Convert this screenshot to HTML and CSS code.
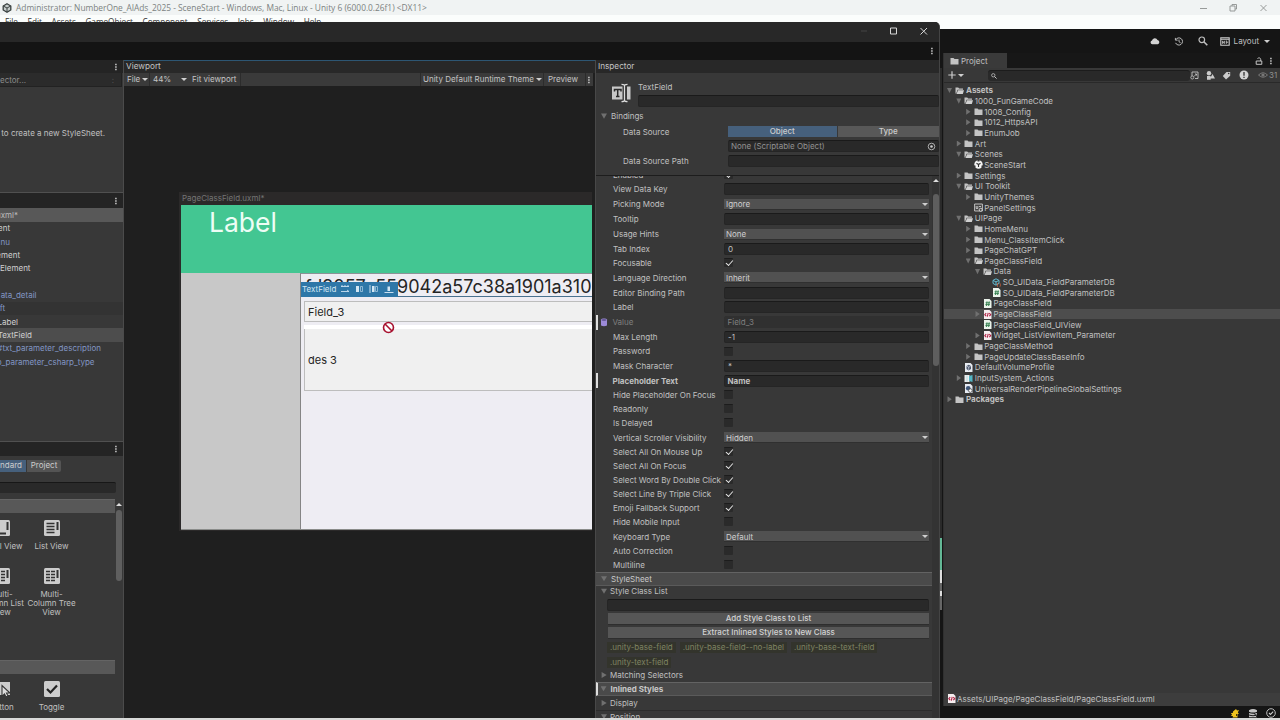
FILE: index.html
```html
<!DOCTYPE html>
<html lang="en">
<head>
    <meta charset="UTF-8">
    <title>Unity 6 - UI Builder</title>
    <link rel="stylesheet" href="styles.css">
</head>
<body>
    <!-- Shared icons -->
    <svg class="defs">
        <symbol id="folder" viewBox="0 0 9 8"><path d="M.5 1h3l1 1h4v5.5h-8z" fill="#c4c4c4"/></symbol>
        <symbol id="open" viewBox="0 0 9 8"><path d="M.5 7V1h2.7l1 1H8v1.2H2.6L1.2 7z" fill="#c4c4c4"/><path d="M3 3.8h6L7.8 7.5H1.5z" fill="#d0d0d0"/></symbol>
        <symbol id="cs" viewBox="0 0 9 9"><path d="M1 0h5.5L8.5 2v7H1z" fill="#ecf4ec"/><path d="M4 2.3 3.4 7M6.2 2.3 5.6 7M2.6 3.8h4.5M2.4 5.6h4.5" stroke="#2f7d4b" stroke-width=".9"/></symbol>
        <symbol id="uxml" viewBox="0 0 9 9"><path d="M1 0h5.5L8.5 2v7H1z" fill="#f6eef0"/><path d="M3.2 3.2 1.8 4.7l1.4 1.5M6.3 3.2l1.4 1.5-1.4 1.5M5.2 2.8l-.9 3.8" stroke="#b02346" stroke-width="1.1" fill="none"/></symbol>
        <symbol id="scene" viewBox="0 0 9 9"><circle cx="4.5" cy="4.5" r="4.2" fill="#f4f4f4"/><path d="M4.500 4.800V7M4.500 4.500 2.500 3.300M4.500 4.500l2-1.200" stroke="#333" stroke-width="1.100"/><path d="M3.500 0h2v1.500h-2zM0 5.500h1.500v1.700H0zM7.500 5.500H9v1.700H7.500z" fill="#383838"/></symbol>
        <symbol id="panelset" viewBox="0 0 9 9"><path d="M.6 1h7.8v7H.6z" fill="#444" stroke="#ccc" stroke-width=".9"/><path d="M2.2 3v2.5h1.6V3M5 3.500h2" stroke="#ddd" stroke-width=".8" fill="none"/><circle cx="6.7" cy="6.8" r="1.500" fill="#444" stroke="#ddd" stroke-width=".9"/></symbol>
        <symbol id="asset" viewBox="0 0 9 9"><path d="M4 .8 7 2.4v3L4 7.2 1 5.4v-3zM1 2.4l3 1.5 3-1.5M4 3.9v3" stroke="#63b9cf" fill="none" stroke-width="1"/><path d="M6 5.3c-1 0 0 1.5-1 1.7 1 .2 0 1.7 1 1.7M7.7 5.3c1 0 0 1.5 1 1.7-1 .2 0 1.7-1 1.7" stroke="#e0653c" fill="none" stroke-width=".8"/></symbol>
        <symbol id="volume" viewBox="0 0 9 9"><path d="M1 0h5.5L8.5 2v7H1z" fill="#e8ecf2"/><path d="M4.7 1.7 7 3v3L4.7 7.5 2.5 6V3z" fill="#4e5a70"/><path d="M2.7 3.1l2 1 2-1M4.7 4v3" stroke="#dfe4ee" stroke-width=".6" fill="none"/></symbol>
        <symbol id="input" viewBox="0 0 9 9"><path d="M.5 1h5v7h-5z" fill="#eee"/><path d="M5 2l3.5-1v7L5 7z" fill="#53b5c4"/><path d="M3 1.5v6" stroke="#a5d5dc" stroke-width=".8"/></symbol>
        <symbol id="urp" viewBox="0 0 9 9"><path d="M1 0h5.5L8.5 2v7H1z" fill="#e6ebf3"/><circle cx="4.2" cy="4.2" r="2.3" fill="#3d5578"/><circle cx="6.4" cy="6.6" r="1.8" fill="#fff" stroke="#444" stroke-width=".8"/></symbol>
        <symbol id="dots" viewBox="0 0 4 10"><path d="M1 1h1.8v1.8H1zM1 4.1h1.8v1.8H1zM1 7.2h1.8v1.8H1z" fill="#d4d4d4"/></symbol>
        <symbol id="search" viewBox="0 0 10 10"><circle cx="3.8" cy="3.8" r="2.8" fill="none" stroke="currentColor" stroke-width="1.2"/><path d="m5.8 5.8 3.5 3.5" stroke="currentColor" stroke-width="1.6"/></symbol>
    </svg>

    <!-- Main editor window -->
    <div class="editor">
        <div class="titlebar">
            <svg class="logo" viewBox="0 0 10 10"><path d="M5 .8 8.8 3v4L5 9.2 1.2 7V3z" fill="#c5cccb" stroke="#39403f" stroke-width="1.3"/><path d="M5 5v4M5 5 1.3 3M5 5l3.7-2" stroke="#39403f"/></svg>
            <span class="caption">Administrator: NumberOne_AIAds_2025 - SceneStart - Windows, Mac, Linux - Unity 6 (6000.0.26f1) &lt;DX11&gt;</span>
            <svg class="win-buttons" viewBox="0 0 70 10"><path d="M2 5.5h7M32.5 3h4.500v5h-5V3zM34 3V1.500h4.500V6h-1.500M62.500 2l6 6M68.500 2l-6 6" fill="none" stroke="#8d9190" stroke-width=".9"/></svg>
        </div>
        <div class="menubar">
            <span>File</span><span>Edit</span><span>Assets</span><span>GameObject</span><span>Component</span><span>Services</span><span>Jobs</span><span>Window</span><span>Help</span>
        </div>
        <div class="main-toolbar">
            <svg class="t-cloud" viewBox="0 0 10 8"><path d="M2.300 7.300A2 2 0 0 1 2 3.400 2.900 2.900 0 0 1 7.500 3a2.200 2.200 0 0 1 .2 4.300z" fill="#d2d2d2"/></svg>
            <svg class="t-hist" viewBox="0 0 10 10"><path d="M1.300 3.200A4 4 0 1 1 1.200 6.500M1 1v2.500h2.500M5 2.800V5.300L6.700 6.300" fill="none" stroke="#c8c8c8" stroke-width="1"/></svg>
            <svg class="t-find" viewBox="0 0 10 10"><use href="#search"/></svg>
            <svg class="t-lay" viewBox="0 0 10 9"><path d="M.8.8h8.400v7.400H.8zM.8 2.200h8.400" fill="none" stroke="#ccc" stroke-width="1.100"/><path d="M2.600 3.800v3M4.300 3.800v3M4 5.300h-1M6.300 3.500v3.300M6.500 5.200h1.700" fill="none" stroke="#ccc" stroke-width=".9"/></svg>
            <span>Layout</span><i class="caret"></i>
        </div>
        <div class="project">
            <div class="project-tabs">
                <div class="tab"><svg class="ic"><use href="#folder"/></svg>Project</div>
                <svg class="lock" viewBox="0 0 8 8"><path d="M1.200 4h5.600v3.300H1.200zM2.500 1.500C4 .3 5.700 1 5.700 2.500V4" fill="none" stroke="#c4c4c4"/></svg>
                <svg class="dots"><use href="#dots"/></svg>
            </div>
            <div class="project-bar">
                <svg class="plus" viewBox="0 0 8 8"><path d="M4 .3v7.400M.3 4h7.400" stroke="#ccc" stroke-width="1.200"/></svg><i class="caret"></i>
                <div class="find"><svg viewBox="0 0 10 10"><use href="#search"/></svg></div>
                <svg class="b1" viewBox="0 0 9 9"><path d="M2 5V1h6v6.500H5M5 3h1.500v1.500M6.300 3.200 4 5.500" fill="none" stroke="#c4c4c4" stroke-width=".9"/><circle cx="2.300" cy="6.500" r="1.500" fill="none" stroke="#c4c4c4" stroke-width=".8"/></svg>
                <svg class="b2" viewBox="0 0 9 9"><circle cx="3" cy="2.300" r="2.200" fill="#ccc"/><path d="M1 5h3.700v3.700H1zM6.500 3 9 7.500H4z" fill="#ccc"/></svg>
                <svg class="b3" viewBox="0 0 9 9"><path d="M4.500 1h3.700v3.700L4 8.500.8 5z" fill="#ccc"/><circle cx="6.700" cy="2.500" r=".8" fill="#383838"/></svg>
                <svg class="b4" viewBox="0 0 10 10"><circle cx="5" cy="5" r="4.500" fill="#d4d4d4"/><path d="M5 2v3.700M5 6.700v1.300" stroke="#333" stroke-width="1.300"/></svg>
                <span class="hidden-count"><svg viewBox="0 0 10 8"><path d="M.5 4Q5-.5 9.500 4 5 8.500.5 4z" fill="none" stroke="#777"/><circle cx="5" cy="4" r="1.600" fill="#777"/></svg>31</span>
            </div>
            <ul class="tree">
                <li class="lv0"><i class="down"></i><svg><use href="#open"/></svg><b>Assets</b></li>
                <li class="lv1"><i class="down"></i><svg><use href="#open"/></svg>1000_FunGameCode</li>
                <li class="lv2"><i class="right"></i><svg><use href="#folder"/></svg>1008_Config</li>
                <li class="lv2"><i class="right"></i><svg><use href="#folder"/></svg>1012_HttpsAPI</li>
                <li class="lv2"><i class="right"></i><svg><use href="#folder"/></svg>EnumJob</li>
                <li class="lv1"><i class="right"></i><svg><use href="#folder"/></svg>Art</li>
                <li class="lv1"><i class="down"></i><svg><use href="#open"/></svg>Scenes</li>
                <li class="lv2"><i></i><svg><use href="#scene"/></svg>SceneStart</li>
                <li class="lv1"><i class="right"></i><svg><use href="#folder"/></svg>Settings</li>
                <li class="lv1"><i class="down"></i><svg><use href="#open"/></svg>UI Toolkit</li>
                <li class="lv2"><i class="right"></i><svg><use href="#folder"/></svg>UnityThemes</li>
                <li class="lv2"><i></i><svg><use href="#panelset"/></svg>PanelSettings</li>
                <li class="lv1"><i class="down"></i><svg><use href="#open"/></svg>UIPage</li>
                <li class="lv2"><i class="right"></i><svg><use href="#folder"/></svg>HomeMenu</li>
                <li class="lv2"><i class="right"></i><svg><use href="#folder"/></svg>Menu_ClassItemClick</li>
                <li class="lv2"><i class="right"></i><svg><use href="#folder"/></svg>PageChatGPT</li>
                <li class="lv2"><i class="down"></i><svg><use href="#open"/></svg>PageClassField</li>
                <li class="lv3"><i class="down"></i><svg><use href="#open"/></svg>Data</li>
                <li class="lv4"><i></i><svg><use href="#asset"/></svg>SO_UIData_FieldParameterDB</li>
                <li class="lv4"><i></i><svg><use href="#cs"/></svg>SO_UIData_FieldParameterDB</li>
                <li class="lv3"><i></i><svg><use href="#cs"/></svg>PageClassField</li>
                <li class="lv3 picked"><i class="right"></i><svg><use href="#uxml"/></svg>PageClassField</li>
                <li class="lv3"><i></i><svg><use href="#cs"/></svg>PageClassField_UIView</li>
                <li class="lv3"><i class="right"></i><svg><use href="#uxml"/></svg>Widget_ListViewItem_Parameter</li>
                <li class="lv2"><i class="right"></i><svg><use href="#folder"/></svg>PageClassMethod</li>
                <li class="lv2"><i class="right"></i><svg><use href="#folder"/></svg>PageUpdateClassBaseInfo</li>
                <li class="lv1"><i></i><svg><use href="#volume"/></svg>DefaultVolumeProfile</li>
                <li class="lv1"><i class="right"></i><svg><use href="#input"/></svg>InputSystem_Actions</li>
                <li class="lv1"><i></i><svg><use href="#urp"/></svg>UniversalRenderPipelineGlobalSettings</li>
                <li class="lv0"><i class="right"></i><svg><use href="#folder"/></svg><b>Packages</b></li>
            </ul>
            <div class="path"><svg><use href="#uxml"/></svg>Assets/UIPage/PageClassField/PageClassField.uxml</div>
        </div>
        <div class="status">
            <svg viewBox="0 0 10 10"><path d="M3 3.500 6 1l1 1.500L9 2 7.800 4.500 9 6H7.500v3.500h-5L3 8H1l1-1.500L.8 5h2z" fill="#efc31c"/><path d="M6.500 6v2" stroke="#443800"/></svg>
            <svg viewBox="0 0 10 10"><path d="M1 2.300Q5-.3 9 2.300v1.400Q5 5.500 1 3.700zM1 5q4 1.600 8 0v1.500q-4 1.500-8 0zM1 7.600q4 1.500 8 0v1.600H1z" fill="#c4c4c4"/><path d="m6 5 3 4" stroke="#191919"/></svg>
            <svg viewBox="0 0 10 10"><circle cx="5" cy="5" r="4.300" fill="none" stroke="#bbb" stroke-width="1"/><path d="m3 5 1.500 1.500L7.200 3.700" fill="none" stroke="#ccc" stroke-width="1.100"/></svg>
        </div>
    </div>
    <div class="sliver"><i class="dark"></i><i class="green"></i><i class="white"></i><i class="grey"></i><i class="white thin"></i><i class="grey tall"></i></div>

    <!-- UI Builder window, lies over the editor -->
    <div class="builder">
        <div class="builder-title"><svg viewBox="0 0 70 10"><path d="M0 5h6" stroke="#444"/><path d="M29.500 2h6v6h-6zM59.500 2l6.500 6.500M66 2l-6.500 6.500" fill="none" stroke="#d8d8d8" stroke-width="1"/></svg></div>
        <div class="builder-strip"><svg class="dots"><use href="#dots"/></svg></div>
        <div class="builder-body">
            <div class="left">
                <div class="pane-head"><svg class="dots"><use href="#dots"/></svg></div>
                <div class="selector"><span>ector...</span><em>:</em></div>
                <div class="hint"><span>to create a new StyleSheet.</span></div>
                <div class="pane-head second"><svg class="dots"><use href="#dots"/></svg></div>
                <div class="hierarchy">
                    <div class="root"><span class="w18">uxml*</span></div>
                    <div><span class="w10">ent</span></div>
                    <div class="blue"><span class="w10">nu</span></div>
                    <div><span class="w20">ement</span></div>
                    <div><span class="w30">Element</span></div>
                    <div></div>
                    <div class="blue"><span class="w36">ata_detail</span></div>
                    <div class="blue shade"><span class="w5">ft</span></div>
                    <div><span class="w18">Label</span></div>
                    <div class="sel"><span class="w32">TextField</span></div>
                    <div class="blue"><span class="w101">#txt_parameter_description</span></div>
                    <div class="blue"><span class="w94">p_parameter_csharp_type</span></div>
                </div>
                <div class="pane-head third"><svg class="dots"><use href="#dots"/></svg></div>
                <div class="lib-tabs"><span class="on">ndard</span><span>Project</span></div>
                <div class="lib-search"></div>
                <div class="library">
                    <div class="lib-list">
                        <div class="lib-bar"></div>
                        <div class="lib-row">
                            <div class="item cut"><svg viewBox="0 0 16 16"><rect width="16" height="16" rx="1.500" fill="#ccc"/><path d="M13.500 2v8M2 13.500h10" stroke="#333" stroke-width="2"/></svg><p>Scroll View</p></div>
                            <div class="item"><svg viewBox="0 0 16 16"><rect width="16" height="16" rx="1.500" fill="#ccc"/><path d="M2.500 3.500h8M2.500 6.500h8M2.500 9.500h8M2.500 12.500h8" stroke="#333" stroke-width="1.300"/><path d="M13.500 2v8" stroke="#333" stroke-width="2"/></svg><p>List View</p></div>
                        </div>
                        <div class="lib-row tall">
                            <div class="item cut"><svg viewBox="0 0 16 16"><rect width="16" height="16" rx="1.500" fill="#ccc"/><path d="M2 3.500h9M2 6.500h9M2 9.500h9M2 12.500h9" stroke="#333" stroke-width="1.300" stroke-dasharray="4 1"/><path d="M13.500 2v8" stroke="#333" stroke-width="2"/></svg><p>Multi-<br>Column List<br>View</p></div>
                            <div class="item"><svg viewBox="0 0 16 16"><rect width="16" height="16" rx="1.500" fill="#ccc"/><path d="M2 3.500h9M2 6.500h9M2 9.500h9M2 12.500h9" stroke="#333" stroke-width="1.300" stroke-dasharray="4 1"/><path d="M13.500 2v8" stroke="#333" stroke-width="2"/></svg><p>Multi-<br>Column Tree<br>View</p></div>
                        </div>
                        <div class="lib-bar"></div>
                        <div class="lib-row">
                            <div class="item cut"><svg viewBox="0 0 16 16"><path d="M0 1h15.500q1.500 0 1.500 1v12H0z" fill="#ccc"/><path d="M8 4.500v11l2.500-2.500 1.500 3 2-1-1.500-3H16z" fill="#ddd" stroke="#333" stroke-width="1.100"/></svg><p>Button</p></div>
                            <div class="item"><svg viewBox="0 0 16 16"><rect width="16" height="16" rx="1.500" fill="#ccc"/><path d="m3 8 3.500 3.500L13 4.500" fill="none" stroke="#222" stroke-width="2.200"/></svg><p>Toggle</p></div>
                        </div>
                    </div>
                    <div class="lib-scroll"><i class="up"></i><b></b></div>
                </div>
            </div>

            <div class="viewport">
                <div class="view-head">Viewport</div>
                <div class="view-bar">
                    <span class="v-file">File<i class="caret"></i></span><span class="v-zoom">44%<i class="caret"></i></span><span class="v-fit">Fit viewport</span>
                    <span class="v-theme">Unity Default Runtime Theme<i class="caret"></i></span><span class="v-prev">Preview</span><svg class="dots"><use href="#dots"/></svg>
                </div>
                <div class="canvas">
                    <div class="canvas-name">PageClassField.uxml*</div>
                    <div class="green-head">Label</div>
                    <div class="page">
                        <div class="side"></div>
                        <div class="content">
                            <div class="guid">fd9057c559042a57c38a1901a310</div>
                            <div class="field one">Field_3</div>
                            <div class="field two">des 3</div>
                            <div class="handle">TextField
                                <svg viewBox="0 0 56 10"><path d="M1 2.500h8M1 7.500h8M2 1v2M5 1v2M8 1v2M7 6l2 1.500" stroke="#c8dff0" stroke-width=".9" fill="none"/><path d="M16 2h3v6h-3z" fill="#d3e6f3"/><path d="M20.500 2.500h2v5h-2zM35.500 2.500h2v5h-2z" stroke="#a5c8df" fill="none" stroke-width=".8"/><path d="M30 1v8" stroke="#c8dff0"/><path d="M32 2h2.500v6H32zM47.500 2.500h2.500V7h-2.500z" fill="#d3e6f3"/><path d="M44.500 8.500h9" stroke="#c8dff0"/></svg>
                            </div>
                        </div>
                    </div>
                </div>
                <svg class="blocked" viewBox="0 0 12 12"><circle cx="6" cy="6" r="4.600" fill="#fff" stroke="#a81230" stroke-width="1.500"/><path d="m2.800 2.800 6.400 6.400" stroke="#a81230" stroke-width="1.500"/></svg>
            </div>

            <div class="inspector">
                <div class="view-head">Inspector</div>
                <div class="ins-top">
                    <div class="who">
                        <svg viewBox="0 0 20 20"><path d="M1 3.500h11v13H1zM16 3.500h3.500v13H16z" fill="#c8c8c8"/><path d="M3.500 8.500V6.500h6.500v2M6.700 6.500v7.500M5 13.500h3.500" stroke="#2b2b2b" stroke-width="1.500" fill="none"/><path d="M13.500 1v18" stroke="#383838" stroke-width="4"/><path d="M10.500 1.300q3 0 3 1.500v14.500q0 1.400-3 1.400M16.500 1.300q-3 0-3 1.500v14.500q0 1.400 3 1.400" stroke="#ddd" stroke-width="1.200" fill="none"/></svg>
                        <div><p>TextField</p><div class="box"></div></div>
                    </div>
                    <div class="fold"><i class="down"></i>Bindings</div>
                    <div class="bind"><label>Data Source</label><div class="pair"><b class="on">Object</b><b>Type</b></div></div>
                    <div class="bind obj"><label></label><div class="box">None (Scriptable Object)<svg viewBox="0 0 9 9"><circle cx="4.500" cy="4.500" r="3.300" fill="none" stroke="#bbb" stroke-width=".9"/><circle cx="4.500" cy="4.500" r="1.300" fill="#ccc"/></svg></div></div>
                    <div class="bind"><label>Data Source Path</label><div class="box"></div></div>
                </div>
                <div class="ins-body">
                    <div class="props">
                        <div class="row tog first"><label>Enabled</label><i class="chk on"></i></div>
                        <div class="row"><label>View Data Key</label><div class="box"></div></div>
                        <div class="row"><label>Picking Mode</label><div class="drop">Ignore<i class="caret"></i></div></div>
                        <div class="row"><label>Tooltip</label><div class="box"></div></div>
                        <div class="row"><label>Usage Hints</label><div class="drop">None<i class="caret"></i></div></div>
                        <div class="row"><label>Tab Index</label><div class="box">0</div></div>
                        <div class="row tog"><label>Focusable</label><i class="chk on"></i></div>
                        <div class="row"><label>Language Direction</label><div class="drop">Inherit<i class="caret"></i></div></div>
                        <div class="row"><label>Editor Binding Path</label><div class="box"></div></div>
                        <div class="row"><label>Label</label><div class="box"></div></div>
                        <div class="row mark dim"><svg viewBox="0 0 8 9"><path d="M1 2q3-2 6 0v5.500q-3 1.500-6 0z" fill="#9c8ad8"/><ellipse cx="4" cy="2" rx="3" ry="1.200" fill="#54468a" stroke="#b5a6ea" stroke-width=".6"/></svg><label>Value</label><div class="box">Field_3</div></div>
                        <div class="row"><label>Max Length</label><div class="box">-1</div></div>
                        <div class="row tog"><label>Password</label><i class="chk"></i></div>
                        <div class="row"><label>Mask Character</label><div class="box">*</div></div>
                        <div class="row mark bold"><label>Placeholder Text</label><div class="box">Name</div></div>
                        <div class="row tog"><label>Hide Placeholder On Focus</label><i class="chk"></i></div>
                        <div class="row tog"><label>Readonly</label><i class="chk"></i></div>
                        <div class="row tog"><label>Is Delayed</label><i class="chk"></i></div>
                        <div class="row"><label>Vertical Scroller Visibility</label><div class="drop">Hidden<i class="caret"></i></div></div>
                        <div class="row tog"><label>Select All On Mouse Up</label><i class="chk on"></i></div>
                        <div class="row tog"><label>Select All On Focus</label><i class="chk on"></i></div>
                        <div class="row tog"><label>Select Word By Double Click</label><i class="chk on"></i></div>
                        <div class="row tog"><label>Select Line By Triple Click</label><i class="chk on"></i></div>
                        <div class="row tog"><label>Emoji Fallback Support</label><i class="chk on"></i></div>
                        <div class="row tog"><label>Hide Mobile Input</label><i class="chk"></i></div>
                        <div class="row"><label>Keyboard Type</label><div class="drop">Default<i class="caret"></i></div></div>
                        <div class="row tog"><label>Auto Correction</label><i class="chk"></i></div>
                        <div class="row tog"><label>Multiline</label><i class="chk"></i></div>
                        <div class="section"><i class="down"></i>StyleSheet</div>
                        <div class="sub"><i class="down"></i>Style Class List</div>
                        <div class="box class-name"></div>
                        <div class="btn">Add Style Class to List</div>
                        <div class="btn">Extract Inlined Styles to New Class</div>
                        <div class="pills"><span>.unity-base-field</span><span>.unity-base-field--no-label</span><span>.unity-base-text-field</span><span>.unity-text-field</span></div>
                        <div class="sub match"><i class="right"></i>Matching Selectors</div>
                        <div class="section mark inl"><i class="down"></i><b>Inlined Styles</b></div>
                        <div class="sub disp"><i class="right"></i>Display</div>
                        <div class="sub pos"><i class="down"></i>Position</div>
                    </div>
                    <div class="scroll"><i class="up"></i><b></b></div>
                </div>
            </div>
        </div>
    </div>
</body>
</html>
```

FILE: styles.css
```css
* { box-sizing: border-box; }
body {
    margin: 0;
    width: 1280px;
    height: 720px;
    overflow: hidden;
    position: relative;
    background: #d9dad9;
    color: #c0c0c0;
    font: 8px/10px Inter, "Liberation Sans", sans-serif;
    white-space: nowrap;
}
p, ul { margin: 0; padding: 0; }
svg { display: block; flex: none; }
.defs { display: none; }

/* small arrows */
.caret { border: 3px solid transparent; border-top: 3.500px solid #cfcfcf; border-bottom: 0; flex: none; }
.up { border: 3px solid transparent; border-bottom: 3px solid #ddd; border-top: 0; }
i.down, i.right { flex: none; width: 6px; height: 6px; background: #707070; }
i.down { clip-path: polygon(0 10%, 100% 10%, 50% 95%); }
i.right { clip-path: polygon(10% 0, 95% 50%, 10% 100%); }
.dots { width: 4px; height: 8px; }
.box { background: #292929; border: 1px solid #252525; border-top-color: #1a1a1a; border-radius: 2px; }

/* main editor */
.editor { height: 718px; display: flex; flex-direction: column; background: #151515; }
.titlebar { height: 15px; background: #f0f3f3; display: flex; align-items: center; padding: 0 12px 0 2px; }
.logo { width: 10px; height: 10px; }
.caption { font: 8.400px/14px "Open Sans", sans-serif; color: #7c8281; margin-left: 4px; flex: 1; letter-spacing: -.02px; }
.win-buttons { width: 70px; height: 10px; }
.menubar { height: 14px; background: #fbfdfc; font: 8.200px/12px "Open Sans", sans-serif; color: #333; display: flex; padding: 1px 5px; gap: 9.500px; }
.main-toolbar { height: 24px; display: flex; align-items: center; justify-content: flex-end; padding-right: 10px; }
.main-toolbar span { margin: 0 5px 0 4px; }
.t-cloud { width: 10px; height: 8px; margin-right: 14px; }
.t-hist { width: 10px; height: 9px; margin-right: 14px; }
.t-find { width: 10px; height: 10px; margin-right: 12px; }
.t-lay { width: 10px; height: 9px; }

.project { margin-left: 943px; flex: 1; display: flex; flex-direction: column; background: #383838; min-height: 0; border-left: 1px solid #303030; }
.project-tabs { height: 15px; background: #171717; display: flex; align-items: center; padding-right: 7px; }
.project-tabs .tab { width: 63px; height: 15px; background: #3a3a3a; display: flex; align-items: center; padding: 1px 0 0 6px; gap: 2px; margin-right: auto; }
.ic { width: 9px; height: 8px; }
.lock { width: 8px; height: 8px; margin-right: 6px; }
.project-bar { height: 15px; display: flex; align-items: center; border-bottom: 1px solid #292929; padding-left: 4px; }
.plus { width: 8px; height: 8px; margin-right: 2px; }
.find { width: 202px; height: 11px; margin-left: 24px; background: #292929; border-top: 1px solid #1c1c1c; border-radius: 3px; padding: 2px 3px; color: #ccc; }
.find svg { width: 6px; height: 6px; }
.b1, .b2, .b3 { width: 9px; height: 9px; }
.b2, .b3 { margin-left: 7px; }
.b4 { width: 10px; height: 10px; margin-left: 8px; }
.hidden-count { display: flex; align-items: center; gap: 1px; margin-left: 9px; color: #909090; }
.hidden-count svg { width: 10px; height: 8px; }

.tree { list-style: none; padding-top: 2px; flex: 1; }
.tree li { height: 10.667px; display: flex; align-items: center; }
.tree i { width: 5px; height: 6px; margin-right: 3px; flex: none; }
.tree i:not([class]) { visibility: hidden; }
.tree svg { width: 9px; height: 9px; margin-right: 1.500px; }
.tree b { margin-left: .5px; }
.lv0 { padding-left: 3px; }
.lv1 { padding-left: 12.300px; }
.lv2 { padding-left: 21.700px; }
.lv3 { padding-left: 31px; }
.lv4 { padding-left: 40.300px; }
.picked { background: #4d4d4d; }
.path { height: 13px; display: flex; align-items: center; padding: 0 0 1px 3px; gap: 1px; background: #3d3d3d; }
.path svg { width: 9px; height: 9px; }
.status { height: 12.500px; display: flex; align-items: center; justify-content: flex-end; gap: 8px; padding: 2px 4px 0 0; }
.status svg { width: 10px; height: 10px; }

/* background window seen at the builder's right edge */
.sliver { position: absolute; left: 940px; top: 68px; width: 2px; display: flex; flex-direction: column; }
.sliver i { height: 8px; background: #666; }
.sliver .dark { height: 470px; background: #2a2a2a; }
.sliver .green { height: 32px; background: #63b896; }
.sliver .white { height: 13px; background: #ddd; }
.sliver .thin { height: 5px; }
.sliver .tall { height: 14px; }

/* builder window */
.builder { position: absolute; left: 0; top: 22px; width: 940px; height: 696px; display: flex; flex-direction: column; background: #1f1f1f; border-radius: 0 5px 0 0; border-right: 1px solid #444; overflow: hidden; }
.builder-title { height: 20px; background: #282828; padding: 4px 8px 0 0; display: flex; justify-content: flex-end; }
.builder-title svg { width: 70px; height: 10px; }
.builder-strip { height: 18px; background: #141414; display: flex; justify-content: flex-end; padding: 5px 5px 0 0; }
.builder-body { display: flex; flex: 1; min-height: 0; }

.left { width: 124px; background: #383838; border-right: 1px solid #4b4b4b; display: flex; flex-direction: column; overflow: hidden; }
.pane-head { height: 13px; background: #242424; display: flex; justify-content: flex-end; align-items: center; padding-right: 5px; flex: none; }
.selector { height: 14px; display: flex; align-items: center; background: #2b2b2b; color: #8c8c8c; margin-right: 1px; justify-content: space-between; flex: none; border-bottom: 1px solid #222; border-right: 1px solid #222; }
.selector em { font-style: normal; margin-right: 7px; color: #555; }
.hint { height: 105px; padding-top: 41px; flex: none; }
.hint span, .hierarchy span { display: flex; justify-content: flex-end; }
.hint span { width: 105px; }
.second { height: 16px; border-top: 1px solid #505050; }
.hierarchy { height: 233px; color: #d0d0d0; flex: none; }
.hierarchy div { height: 13.330px; display: flex; align-items: center; }
.hierarchy .root { background: #585858; color: #bbb; height: 13.700px; }
.hierarchy .sel { background: #4d4d4d; }
.hierarchy .blue { color: #8296c4; }
.hierarchy .shade { background: #333; }
.w5 { width: 5px; }
.w10 { width: 10px; }
.w18 { width: 18px; }
.w20 { width: 20px; }
.w30 { width: 30.500px; }
.w32 { width: 32px; }
.w36 { width: 36.500px; }
.w94 { width: 94.500px; }
.w101 { width: 101px; }
.third { height: 15px; border-top: 1px solid #505050; }
.lib-tabs { display: flex; gap: 1px; margin-top: 4px; height: 12px; flex: none; }
.lib-tabs span { background: #545454; width: 34px; text-align: center; line-height: 11px; border-radius: 0 2px 2px 0; color: #ccc; }
.lib-tabs .on { background: #46607c; width: 26px; display: flex; justify-content: flex-end; padding-right: 4px; border-radius: 0; }
.lib-search { height: 11px; margin: 10px 7px 6px 0; background: #292929; border-top: 1px solid #171717; border-radius: 0 2px 2px 0; flex: none; }
.library { display: flex; flex: 1; min-height: 0; }
.lib-list { width: 115px; overflow: hidden; flex: none; }
.lib-bar { height: 14px; background: #585858; border-top: 1px solid #646464; }
.lib-row { height: 48px; padding-top: 7px; display: flex; }
.lib-row.tall { height: 99px; }
.item { width: 50px; text-align: center; line-height: 9px; flex: none; margin-left: -1px; }
.item.cut { margin-left: -23px; }
.item + .item { margin-left: 0; }
.item svg { width: 16px; height: 16px; margin: 0 auto 6px 17px; }
.item p { margin-left: -1px; }
.lib-scroll { width: 8px; padding-top: 4px; display: flex; flex-direction: column; align-items: center; }
.lib-scroll b { width: 6px; height: 71px; background: #5f5f5f; border-radius: 3px; margin-top: 4px; }

.viewport { width: 471px; display: flex; flex-direction: column; border-top: 1px solid #2d5673; }
.view-head { height: 13px; background: #282828; padding: 1px 2px; color: #c4c4c4; font-size: 8.200px; flex: none; }
.viewport .view-head { height: 12px; padding-top: 0; }
.view-bar { height: 13px; background: #3a3a3a; display: flex; align-items: center; color: #c4c4c4; flex: none; width: 469px; }
.view-bar span { height: 13px; display: flex; align-items: center; border-right: 1px solid #2c2c2c; padding: 0 0 1px 3px; }
.v-file { width: 26px; gap: 2px; }
.view-bar .v-zoom { width: 37px; justify-content: space-between; padding-right: 0; border: 0; }
.v-fit { width: 54px; }
.view-bar .v-fit { padding-left: 5px; }
.view-bar .v-theme { margin-left: auto; gap: 2px; width: 124px; border-left: 1px solid #2c2c2c; padding-left: 2px; }
.view-bar .v-prev { width: 42px; padding-left: 4px; }
.view-bar .dots { margin: 0 2px 0 1px; }
.canvas { margin: 106px 0 0 55px; width: 413px; height: 339px; background: #2b2929; padding-left: 2px; overflow: hidden; }
.canvas-name { height: 13px; color: #747474; padding: 1px; }
.green-head { height: 68px; background: #43c692; color: #edfdf5; font-size: 26.500px; line-height: 35px; padding-left: 28px; }
.page { display: flex; height: 257px; border-bottom: 1px solid #8a8c8a; }
.side { width: 119px; background: #c8c8c8; }
.content { flex: 1; background: #eeedf3; border-left: 1px solid #858585; border-top: 1px solid #8b9297; position: relative; color: #242424; overflow: hidden; }
.guid { height: 23px; font-size: 18px; line-height: 26px; padding-left: 4px; border-bottom: 1px solid #49718f; overflow: hidden; }
.field { border: 1px solid #bdbdbd; border-right: 0; margin-left: 3px; background: #f0f0f0; font-size: 11px; padding-left: 3px; }
.field.one { height: 21px; line-height: 21px; margin-top: 4px; }
.field.two { height: 62px; line-height: 63px; margin-top: 7px; border-top: 0; box-shadow: 0 -4px #fff; }
.handle { position: absolute; left: 0; top: 8px; width: 97px; height: 15px; background: #2e77a8; color: #d3e6f3; display: flex; align-items: center; padding: 0 0 1px 1px; gap: 4px; }
.handle svg { width: 56px; height: 10px; }
.blocked { position: absolute; left: 382px; top: 299px; width: 13px; height: 13px; }

/* inspector */
.inspector { width: 344px; background: #383838; border-left: 1px solid #484848; display: flex; flex-direction: column; overflow: hidden; }
.ins-top { height: 102px; flex: none; padding-top: 9px; }
.who { display: flex; gap: 7px; padding-left: 15px; }
.who > svg { width: 20px; height: 20px; margin-top: 1px; }
.who > div { flex: 1; }
.who .box { height: 12px; margin: 3px 0 0; }
.fold { display: flex; align-items: center; gap: 4px; margin: 3px 0 0 5px; height: 12px; }
.bind { display: flex; align-items: center; height: 14.500px; padding-left: 27px; margin-top: 1px; }
.fold + .bind { margin-top: 2.500px; }
.bind label { width: 105px; }
.bind .box { flex: 1; height: 12px; line-height: 10px; display: flex; justify-content: space-between; align-items: center; padding: 0 2px; color: #929292; }
.bind.obj { margin-top: 0; }
.bind.obj + .bind { margin-top: .5px; }
.bind .box svg { width: 9px; height: 9px; }
.pair { flex: 1; display: flex; gap: 1px; text-align: center; }
.pair b { height: 11px; line-height: 11px; font-weight: 500; background: #585858; flex: 101; color: #ccc; }
.pair .on { background: #46607c; flex: 108; }
.ins-body { flex: 1; display: flex; min-height: 0; border-top: 1.500px solid #1d1d1d; }
.props { width: 336px; overflow: hidden; }
.row { height: 14.870px; display: flex; align-items: center; padding: 0 3px 0 17px; }
.tog { height: 14px; padding-bottom: 1px; }
.first { margin-top: -8px; }
.row label { width: 111px; flex: none; }
.row .box { flex: 1; height: 12px; line-height: 10px; padding-left: 3px; }
.drop { flex: 1; height: 11px; line-height: 12px; background: #515151; padding: 1px 1px 0 2px; display: flex; justify-content: space-between; align-items: center; color: #cfcfcf; border-bottom: 1px solid #303030; }
.chk { width: 9px; height: 9px; background: #2a2a2a; border-top: 1px solid #1c1c1c; border-radius: 1px; }
.chk.on::before { content: ""; display: block; width: 5.500px; height: 3px; border: solid #e6e6e6; border-width: 0 0 1.300px 1.300px; transform: translate(2px, 1.300px) rotate(-48deg); }
.mark { border-left: 2.500px solid #dedede; padding-left: 14.500px; }
.mark svg { width: 8px; height: 9px; margin: 0 5px 0 -13px; }
.dim { color: #7f7f7f; }
.dim .box { background: #303030; border-color: #303030; }
.bold { font-weight: 700; }
.section { height: 14px; background: #4a4a4a; border-top: 1px solid #636363; border-bottom: 1px solid #5a5a5a; display: flex; align-items: center; gap: 4px; padding: 0 0 1px 5px; color: #c8c8c8; }
.sub { display: flex; align-items: center; gap: 3px; height: 12px; padding: 0 0 2px 5px; }
.class-name { height: 12px; margin: 1px 3px 2px 11px; }
.btn { height: 12px; background: #565656; margin: 1px 3px 2px 12px; border-bottom: 1px solid #2e2e2e; text-align: center; font-weight: 500; color: #d2d2d2; line-height: 11px; }
.pills { display: flex; flex-wrap: wrap; gap: 4px; padding: 1px 0 1px 11px; color: #7f8362; }
.pills span { background: #33342c; padding: 0 3px; height: 11px; line-height: 10px; }
.match { height: 13px; padding-bottom: 1px; }
.inl { padding-left: 2.500px; }
.disp { height: 15px; border-bottom: 1px solid #2c2c2c; padding-bottom: 0; }
.pos { padding-top: 1px; }
.scroll { width: 7px; background: #333; display: flex; flex-direction: column; align-items: center; padding-top: 3px; }
.scroll b { width: 6px; height: 172px; margin-top: 12px; background: #5e5e5e; border-radius: 3px; }
```
